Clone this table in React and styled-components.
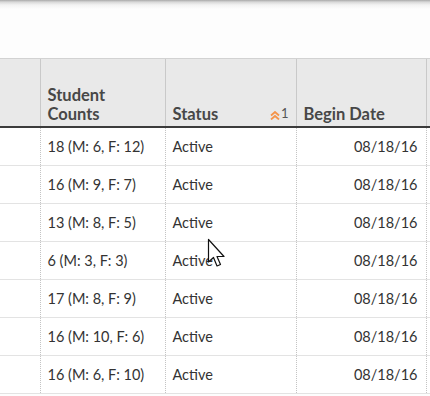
import React from 'react'
import styled, { createGlobalStyle } from 'styled-components'

const rows = [
	{ counts: '18 (M: 6, F: 12)', status: 'Active', begin: '08/18/16' },
	{ counts: '16 (M: 9, F: 7)', status: 'Active', begin: '08/18/16' },
	{ counts: '13 (M: 8, F: 5)', status: 'Active', begin: '08/18/16' },
	{ counts: '6 (M: 3, F: 3)', status: 'Active', begin: '08/18/16' },
	{ counts: '17 (M: 8, F: 9)', status: 'Active', begin: '08/18/16' },
	{ counts: '16 (M: 10, F: 6)', status: 'Active', begin: '08/18/16' },
	{ counts: '16 (M: 6, F: 10)', status: 'Active', begin: '08/18/16' },
]

const GlobalStyle = createGlobalStyle`
	html, body {
		margin: 0;
		background: #fdfdfd;
		overflow: hidden;
	}
	body {
		font-family: Lato, 'Open Sans', sans-serif;
	}
`

const Page = styled.div`
	position: relative;
	width: 430px;
	height: 396px;
	overflow: hidden;
`

const TopBar = styled.div`
	height: 58px;
	background: linear-gradient(#a9a9a9 0px, #d8d8d8 2px, #f3f3f3 5px, #fdfdfd 9px);
	border-bottom: 1px solid #d2d2d2;
`

const Table = styled.table`
	border-collapse: collapse;
	table-layout: fixed;
	width: 460px;
	font-size: 14.5px;
	color: #333;
`

const HeadCell = styled.th`
	box-sizing: border-box;
	height: 68px;
	padding: 0 8px 2px 7px;
	background: #e9e9e9;
	border-right: 1px solid #c9c9c9;
	border-bottom: 2px solid #3c3c3c;
	vertical-align: bottom;
	text-align: left;
	font-family: Lato, sans-serif;
	font-size: 16.5px;
	font-weight: 700;
	color: #474747;
	line-height: 19px;
	position: relative;
`

const SortMark = styled.span`
	position: absolute;
	right: 7px;
	bottom: 6px;
	display: flex;
	align-items: flex-start;
	color: #555;
	font-weight: 400;
	font-size: 13px;
	line-height: 13px;
	svg {
		margin-top: 4px;
		margin-right: 1px;
	}
`

const Cell = styled.td`
	box-sizing: border-box;
	height: 38px;
	padding: 0 8px 0 7px;
	border-right: 1px dotted #c4c4c4;
	border-bottom: 1px solid #e3e3e3;
	text-align: ${(p) => (p.$right ? 'right' : 'left')};
	white-space: nowrap;
	overflow: hidden;
	background: #fff;
`

const Pointer = styled.svg`
	position: absolute;
	left: 207px;
	top: 238px;
`

const SortIcon = () => (
	<svg width="10" height="9" viewBox="0 0 10 9">
		<path d="M1 4.5 L5 1 L9 4.5 M1 8.5 L5 5 L9 8.5" fill="none" stroke="#f5944a" strokeWidth="1.8" />
	</svg>
)

const App = () => (
	<Page>
		<GlobalStyle />
		<TopBar />
		<Table>
			<colgroup>
				<col style={{ width: 40 }} />
				<col style={{ width: 125 }} />
				<col style={{ width: 131 }} />
				<col style={{ width: 130 }} />
				<col style={{ width: 34 }} />
			</colgroup>
			<thead>
				<tr>
					<HeadCell />
					<HeadCell>
						Student
						<br />
						Counts
					</HeadCell>
					<HeadCell>
						Status
						<SortMark>
							<SortIcon />1
						</SortMark>
					</HeadCell>
					<HeadCell>Begin Date</HeadCell>
					<HeadCell />
				</tr>
			</thead>
			<tbody>
				{rows.map((r, i) => (
					<tr key={i}>
						<Cell />
						<Cell>{r.counts}</Cell>
						<Cell>{r.status}</Cell>
						<Cell $right>{r.begin}</Cell>
						<Cell />
					</tr>
				))}
			</tbody>
		</Table>
		<Pointer width="22" height="32" viewBox="0 0 22 32">
			<path d="M1.5 1.5 L1.5 24 L6.5 19.5 L10 28 L13.5 26.5 L10 18.5 L17 18.5 Z" fill="#fff" stroke="#111" strokeWidth="1.2" strokeLinejoin="round" />
		</Pointer>
	</Page>
)

export default App
